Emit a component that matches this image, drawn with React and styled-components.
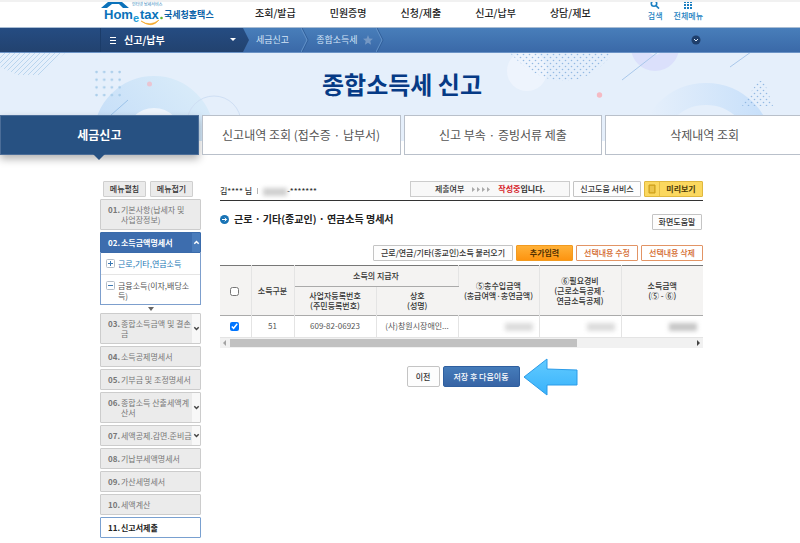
import React, { useState } from 'react';
import styled, { createGlobalStyle, css } from 'styled-components';

const GlobalStyle = createGlobalStyle`
  * {
    box-sizing: border-box;
  }

  body {
    margin: 0;
    background-color: #ffffff;
    color: #333333;
    font-family: 'Noto Sans CJK KR', sans-serif;
    font-size: 8px;
    line-height: 10px;
    overflow-x: hidden;
  }

  button, input {
    font-family: inherit;
    font-size: inherit;
    line-height: inherit;
    cursor: pointer;
  }

  a {
    color: inherit;
    text-decoration: none;
  }
`;

const Header = styled.header`
  display: flex;
  height: 27px;
  padding: 0 97px 0 100px;
  border-top: 2px solid #f1f1f1;
`;

const Logo = styled.a`
  flex: none;
  width: 115px;
  height: 25px;

  svg {
    overflow: visible;
  }
`;

const MainNav = styled.nav`
  display: flex;
  flex: 1;
  gap: 34px;
  padding: 2px 0 0 40px;
`;

const MainNavLink = styled.a`
  font-size: 10px;
  line-height: 18px;
  font-weight: 500;
  color: #222222;
  white-space: nowrap;
`;

const Tools = styled.div`
  display: flex;
  gap: 11px;
`;

const ToolButton = styled.button`
  display: flex;
  flex-direction: column;
  align-items: center;
  gap: 2px;
  padding: 0;
  border: none;
  background-color: transparent;
  color: #1b7fc1;
  font-weight: 500;
  white-space: nowrap;
`;

const Location = styled.nav`
  display: flex;
  align-items: center;
  height: 26px;
  padding-right: 97px;
  background: linear-gradient(#487eba, #3a69a8);
  border-top: 1px solid #a9bdd4;
  border-bottom: 1px solid #6b93c6;
  color: #d3e4f7;
`;

const LocationCurrent = styled.button`
  display: flex;
  align-items: center;
  gap: 7px;
  width: 249px;
  height: 24px;
  padding: 0 13px 0 109px;
  border: none;
  background: linear-gradient(90deg, transparent 100px, #1b3c69 100px, #1b3c69 101px, transparent 101px), linear-gradient(#254c82, #22426f);
  clip-path: polygon(0 0, 243px 0, 249px 12px, 243px 100%, 0 100%);
  color: #ffffff;
  font-size: 10px;
  font-weight: 700;
  text-align: left;

  span {
    flex: 1;
  }
`;

const LocationLink = styled.a`
  display: flex;
  align-items: center;
  gap: 5px;
  padding: 0 12px 0 7px;
  font-size: 9px;

  &:last-of-type {
    padding-right: 3px;
  }
`;

const LocationToggle = styled.button`
  display: flex;
  margin-left: auto;
  margin-right: 2px;
  padding: 0;
  border: none;
  background-color: transparent;
`;

const Banner = styled.section`
  position: relative;
  height: 62px;
  padding: 0 0 0 4px;
`;

const BannerArt = styled.svg`
  position: absolute;
  left: 0;
  top: 0;
  z-index: -1;
  width: 100%;
  height: 88px;
  background-color: #e5effb;
`;

const PageTitle = styled.h1`
  margin: 0;
  padding-top: 15px;
  color: #063a85;
  font-size: 24px;
  line-height: 32px;
  font-weight: 700;
  text-align: center;
`;

const Tabs = styled.nav`
  display: grid;
  grid-template-columns: repeat(4, 1fr);
  gap: 3px;
  margin-right: -4px;
`;

const Tab = styled.button`
  position: relative;
  height: 40px;
  padding: 0;
  border: 1px solid #b9c0ca;
  background-color: #ffffff;
  color: #555555;
  font-size: 12px;
  line-height: 18px;
  white-space: nowrap;

  ${(props) => props.$active && css`
    border-color: #4b6d98;
    background-color: #275182;
    color: #ffffff;
    font-weight: 700;
    box-shadow: 0 4px 8px rgba(0, 0, 0, 0.3);

    &::after {
      content: '';
      position: absolute;
      left: 50%;
      top: 100%;
      margin-left: -6px;
      border: 6px solid transparent;
      border-top-color: #275182;
      border-bottom: none;
    }
  `}
`;

const Body = styled.div`
  display: flex;
  align-items: flex-start;
  gap: 19px;
  padding: 26px 97px 0 100px;
`;

const Side = styled.aside`
  flex: none;
  width: 101px;
`;

const SideTools = styled.div`
  display: flex;
  gap: 4px;
  padding: 0 3px;
  margin-bottom: 2px;
`;

const SideButton = styled.button`
  width: 43px;
  height: 16px;
  padding: 0;
  border: 1px solid #cfcfcf;
  border-radius: 1px;
  background-color: #ebebeb;
  color: #333333;
  font-weight: 500;
  white-space: nowrap;
`;

const StepList = styled.ol`
  display: flex;
  flex-direction: column;
  gap: 2px;
  margin: 0;
  padding: 0;
  list-style: none;
`;

const StepButton = styled.button`
  display: flex;
  align-items: center;
  width: 100%;
  height: ${(props) => (props.$tall ? '31px' : '21px')};
  padding: 0;
  overflow: hidden;
  border: 1px solid #cccccc;
  border-radius: 1px;
  background-color: #ebebeb;
  color: #777777;
  text-align: left;

  ${(props) => props.$open && css`
    border-color: #3a6bab;
    background-color: #3d6dae;
    color: #ffffff;
    font-weight: 700;
  `}

  ${(props) => props.$current && css`
    border-color: #79a0d0;
    background-color: #ffffff;
    color: #222222;
    font-weight: 700;
  `}
`;

const StepNumber = styled.b`
  flex: none;
  align-self: flex-start;
  width: 20px;
  padding: 5px 0 0 7px;
  font-weight: 700;
`;

const StepLabel = styled.span`
  flex: 1;
  align-self: flex-start;
  padding-top: 5px;
  white-space: pre;
`;

const StepArrow = styled.span`
  display: flex;
  flex: none;
  align-items: center;
  justify-content: center;
  width: 8px;
  height: 100%;
  background-color: ${(props) => (props.$open ? '#4a7cbb' : '#f8f8f8')};
`;

const SubList = styled.ul`
  margin: 0;
  padding: 0;
  border: 1px solid #7d9fcd;
  border-top: none;
  list-style: none;
`;

const SubItem = styled.li`
  display: flex;
  align-items: flex-start;
  gap: 3px;
  padding: 6px 5px 5px;

  & + & {
    padding: 6px 5px 3px;
    border-top: 1px solid #e5e5e5;
  }
`;

const SubLink = styled.a`
  color: ${(props) => (props.$active ? '#2377b5' : '#555555')};
  white-space: pre;
`;

const SubArrow = styled.div`
  display: flex;
  justify-content: center;
  height: 8px;
  margin-bottom: -2px;
  padding-top: 2px;
`;

const Content = styled.main`
  flex: 1;
  min-width: 0;
`;

const UserBar = styled.div`
  display: flex;
  align-items: flex-start;
  gap: 3px;
  height: 20px;
  border-bottom: 1px solid #333333;
`;

const UserName = styled.p`
  display: flex;
  flex: 1;
  align-items: center;
  gap: 5px;
  margin: 0;
  padding-top: 5px;
  font-weight: 500;
  white-space: nowrap;
`;

const Divider = styled.i`
  width: 1px;
  height: 6px;
  background-color: #b5b5b5;
`;

const Masked = styled.span`
  display: inline-block;
  width: ${(props) => props.$width};
  height: 8px;
  background-color: ${(props) => props.$color || '#cfcfcf'};
  filter: blur(2px);
  vertical-align: middle;
`;

const Status = styled.div`
  display: flex;
  align-items: center;
  justify-content: center;
  gap: 8px;
  width: 160px;
  height: 16px;
  border: 1px solid #cccccc;
  background-color: #f8f8f8;
  font-weight: 500;

  span {
    font-weight: 700;
  }

  em {
    color: #d6232a;
    font-style: normal;
  }
`;

const buttonColors = {
  plain: css`
    border-color: #c4c4c4;
    background-color: #fdfdfd;
    color: #333333;
  `,
  yellow: css`
    border-color: #e0b83e;
    background-color: #fbd85f;
    color: #4a3a08;
    font-weight: 700;
  `,
  orange: css`
    border-color: #f29a1f;
    background: linear-gradient(#ffb138, #fd9410);
    color: #533000;
    font-weight: 700;
  `,
  outline: css`
    border-color: #e29465;
    background-color: #ffffff;
    color: #d3682c;
  `,
  blue: css`
    border-color: #2f5f9f;
    background: linear-gradient(#457cba, #3764a5);
    color: #ffffff;
  `,
};

const Button = styled.button`
  display: flex;
  align-items: center;
  justify-content: center;
  width: ${(props) => props.$width};
  height: ${(props) => (props.$large ? '21px' : '16px')};
  padding: 0;
  border: 1px solid;
  border-radius: ${(props) => (props.$large ? '2px' : '1px')};
  font-weight: 500;
  white-space: nowrap;
  ${(props) => buttonColors[props.$color || 'plain']}

  svg {
    flex: none;
  }

  span {
    flex: 1;
  }
`;

const TitleRow = styled.div`
  display: flex;
  justify-content: space-between;
  padding: 10px 1px 0 0;
`;

const SectionTitle = styled.h2`
  display: flex;
  align-items: center;
  gap: 5px;
  height: 16px;
  margin: 0;
  color: #222222;
  font-size: 10px;
  line-height: 16px;
  font-weight: 700;
  white-space: nowrap;
`;

const HelpBox = styled.div`
  padding-top: 3px;
`;

const Actions = styled.div`
  display: flex;
  justify-content: flex-end;
  gap: 3px;
  margin: 15px 0 4px;
`;

const Table = styled.table`
  width: 100%;
  table-layout: fixed;
  border-collapse: collapse;
  border-top: 1px solid #777777;
  text-align: center;

  th, td {
    padding: 0;
    border-right: 1px solid #e4e4e4;
    white-space: pre;
  }

  th:last-child, td:last-child {
    border-right: none;
  }

  thead {
    background-color: #f4f3f2;
    border-bottom: 1px solid #aaaaaa;
  }

  th {
    font-weight: 500;
  }

  td {
    height: 21px;
    color: #555555;
  }
`;

const HeadRow = styled.tr`
  height: ${(props) => props.$height};

  th[colspan] {
    border-bottom: 1px solid #aaaaaa;
  }
`;

const AmountCell = styled.td`
  && {
    padding-right: 6px;
    text-align: right;
  }
`;

const Check = styled.input`
  width: 9px;
  height: 9px;
  margin: 0 2px 0 0;
  vertical-align: middle;
`;

const ScrollBar = styled.div`
  display: flex;
  align-items: center;
  justify-content: space-between;
  height: 11px;
  padding: 0 3px;
  background-color: #f1f1f1;
  border-top: 1px solid #e4e4e4;
`;

const ScrollTrack = styled.div`
  flex: 1;
  height: 8px;
  margin: 0 4px 0 3px;
`;

const ScrollThumb = styled.div`
  width: 75%;
  height: 100%;
  background-color: #c1c1c1;
`;

const Bottom = styled.div`
  display: flex;
  align-items: center;
  justify-content: center;
  gap: 3px;
  margin-top: 10px;
  padding-left: 62px;
`;

const steps = [
  { no: '01.', label: '기본사항(납세자 및\n사업장정보)', tall: true },
  { no: '02.', label: '소득금액명세서', open: true, arrow: true },
  { no: '03.', label: '종합소득금액 및 결손\n금', tall: true, arrow: true },
  { no: '04.', label: '소득공제명세서' },
  { no: '05.', label: '기부금 및 조정명세서' },
  { no: '06.', label: '종합소득 산출세액계\n산서', tall: true, arrow: true },
  { no: '07.', label: '세액공제.감면.준비금', arrow: true },
  { no: '08.', label: '기납부세액명세서' },
  { no: '09.', label: '가산세명세서' },
  { no: '10.', label: '세액계산' },
  { no: '11.', label: '신고서제출', current: true },
];

const tabs = ['세금신고', '신고내역 조회 (접수증 · 납부서)', '신고 부속 · 증빙서류 제출', '삭제내역 조회'];

const Chevron = ({ up, color = '#444444' }) => (
  <svg width="7" height="7" viewBox="0 0 7 7" fill="none" stroke={color} strokeWidth="1.5">
    <path d={up ? 'M1.3 4.7 3.5 2.5l2.2 2.2' : 'M1.3 2.3l2.2 2.2 2.2-2.2'} />
  </svg>
);

const Separator = () => (
  <svg width="8" height="24" viewBox="0 0 8 24" fill="none">
    <path d="M1 0l6 12-6 12" stroke="#2f5c97" />
    <path d="M0 0l6 12-6 12" stroke="#6393c9" />
  </svg>
);

const TreeIcon = ({ plus }) => (
  <svg width="9" height="9" viewBox="0 0 9 9" fill="none">
    <rect x=".5" y=".5" width="8" height="8" rx="1" fill="#fff" stroke="#b5bec8" />
    <path d={plus ? 'M2 4.5h5M4.5 2v5' : 'M2 4.5h5'} stroke="#3b78b3" />
  </svg>
);

const HometaxLogo = () => (
  <svg width="115" height="25" viewBox="0 0 115 25">
    <path d="M1 6 8 0h14l7 6h-6l-4-4h-7L7 6z" fill="#0b72ba" />
    <text x="32" y="4" fontSize="4" fill="#2b7fb9">인터넷 납세서비스</text>
    <text x="4" y="17" fontFamily="Liberation Sans, sans-serif" fontSize="13" fontWeight="700" fill="#0b72ba">Hom</text>
    <text x="33" y="20" fontFamily="Liberation Sans, sans-serif" fontSize="11" fontWeight="700" fill="#1a9bd7">e</text>
    <text x="40" y="17" fontFamily="Liberation Sans, sans-serif" fontSize="13" fontWeight="700" fill="#0b72ba">tax</text>
    <path d="M41 19q9 6 18-1q-7 9-18 1z" fill="#f5a623" stroke="#f5a623" strokeWidth=".6" />
    <circle cx="61.5" cy="16" r="1.3" fill="#5cb531" />
    <text x="64" y="16" fontSize="9" fontWeight="700" fill="#0b62a8">국세청홈택스</text>
  </svg>
);

const BannerDrawing = () => (
  <BannerArt viewBox="0 0 800 88" preserveAspectRatio="xMidYMin slice" fill="none">
    <defs>
      <pattern id="stripes" width="5" height="5" patternUnits="userSpaceOnUse">
        <path d="M-1 6 6-1M-1 1l2-2M4 6l2-2" stroke="#b4d2ec" strokeWidth=".9" />
      </pattern>
      <pattern id="dots" width="6" height="6" patternUnits="userSpaceOnUse">
        <circle cx="1.5" cy="1.5" r=".8" fill="#93b9e2" />
        <circle cx="4.5" cy="4.5" r=".8" fill="#93b9e2" />
      </pattern>
      <pattern id="grid" width="7.7" height="7.7" x="93" y="17" patternUnits="userSpaceOnUse">
        <circle cx="3.5" cy="2" r="1.3" fill="#a9cdea" />
      </pattern>
      <linearGradient id="ringLeft" x1="0" y1="1" x2="1" y2="0">
        <stop offset="0" stopColor="#c0daf8" />
        <stop offset="1" stopColor="#d8ebf9" />
      </linearGradient>
      <linearGradient id="ringRight">
        <stop offset="0" stopColor="#e5effb" />
        <stop offset="1" stopColor="#c8e0fa" />
      </linearGradient>
    </defs>
    <path d="M0 0h65L40 22H18L0 14z" fill="url(#stripes)" />
    <circle cx="154" cy="83" r="44" fill="#edf4fc" stroke="url(#ringLeft)" strokeWidth="32" />
    <circle cx="214" cy="70" r="27" stroke="#cfdff4" />
    <rect x="93" y="17" width="30" height="30" fill="url(#grid)" />
    <path d="M111 62l17-15" stroke="#9cc3ea" />
    <circle cx="149.5" cy="31" r="2.5" fill="#eac5d2" />
    <circle cx="527" cy="18" r="20" fill="#eef4fd" />
    <path d="M510 0h103q-21 28-49 28T510 0z" fill="url(#dots)" />
    <circle cx="655" cy="-6" r="16" stroke="#dbe0fb" strokeWidth="16" />
    <path d="M622 27l36-28M730 14l21-15" stroke="#a9c7ea" />
    <circle cx="599.5" cy="42" r="2.7" fill="#f5bac3" />
    <circle cx="706" cy="97" r="56" stroke="url(#ringRight)" strokeWidth="22" />
    <path d="M758 28h6l9 25h-31z" fill="url(#dots)" />
  </BannerArt>
);

const App = () => {
  const [activeTab, setActiveTab] = useState(0);
  const [allChecked, setAllChecked] = useState(false);
  const [rowChecked, setRowChecked] = useState(true);

  return (
    <>
      <GlobalStyle />
      <Header>
        <Logo href="#" aria-label="국세청홈택스"><HometaxLogo /></Logo>
        <MainNav>
          {['조회/발급', '민원증명', '신청/제출', '신고/납부', '상담/제보'].map((menu) => (
            <MainNavLink href="#" key={menu}>{menu}</MainNavLink>
          ))}
        </MainNav>
        <Tools>
          <ToolButton>
            <svg width="10" height="7" viewBox="0 0 10 7" fill="none" stroke="#1b7fc1" strokeWidth="1.6">
              <circle cx="4" cy="1.6" r="2.7" />
              <path d="M6 3.6l3 3" />
            </svg>
            검색
          </ToolButton>
          <ToolButton>
            <svg width="9" height="7" viewBox="0 0 9 7" fill="#1b7fc1">
              <path d="M0 0h2v1H0zM3 0h2v1H3zM6 0h2v1H6zM0 2h2v2H0zM3 2h2v2H3zM6 2h2v2H6zM0 5h2v2H0zM3 5h2v2H3zM6 5h2v2H6z" />
            </svg>
            전체메뉴
          </ToolButton>
        </Tools>
      </Header>

      <Location>
        <LocationCurrent>
          <svg width="8" height="7" viewBox="0 0 8 7" stroke="#fff"><path d="M1 .5h6M1 3.5h6M1 6.5h6" /></svg>
          <span>신고/납부</span>
          <svg width="6" height="4" viewBox="0 0 6 4" fill="#fff"><path d="M0 0h6L3 3z" /></svg>
        </LocationCurrent>
        <LocationLink href="#">세금신고</LocationLink>
        <Separator />
        <LocationLink href="#">
          종합소득세
          <svg width="10" height="10" viewBox="0 0 10 10" fill="#7598c4"><path d="M5 0l1.4 3.4 3.6.3-2.7 2.4.8 3.6L5 7.8 1.9 9.7l.8-3.6L0 3.7l3.6-.3z" /></svg>
        </LocationLink>
        <Separator />
        <LocationToggle aria-label="펼치기">
          <svg width="10" height="10" viewBox="0 0 10 10" fill="none">
            <circle cx="5" cy="5" r="4.5" fill="#1f3f6c" />
            <path d="M3 4l2 2 2-2" stroke="#dfe9f5" />
          </svg>
        </LocationToggle>
      </Location>

      <Banner>
        <BannerDrawing />
        <PageTitle>종합소득세 신고</PageTitle>
      </Banner>

      <Tabs>
        {tabs.map((tab, index) => (
          <Tab key={tab} $active={index === activeTab} onClick={() => setActiveTab(index)}>{tab}</Tab>
        ))}
      </Tabs>

      <Body>
        <Side>
          <SideTools>
            <SideButton>메뉴펼침</SideButton>
            <SideButton>메뉴접기</SideButton>
          </SideTools>
          <StepList>
            {steps.map((step) => (
              <li key={step.no}>
                <StepButton $tall={step.tall} $open={step.open} $current={step.current}>
                  <StepNumber>{step.no}</StepNumber>
                  <StepLabel>{step.label}</StepLabel>
                  {step.arrow && (
                    <StepArrow $open={step.open}>
                      <Chevron up={step.open} color={step.open ? '#ffffff' : '#444444'} />
                    </StepArrow>
                  )}
                </StepButton>
                {step.open && (
                  <>
                    <SubList>
                      <SubItem>
                        <TreeIcon plus />
                        <SubLink href="#" $active>근로,기타,연금소득</SubLink>
                      </SubItem>
                      <SubItem>
                        <TreeIcon />
                        <SubLink href="#">{'금융소득(이자,배당소\n득)'}</SubLink>
                      </SubItem>
                    </SubList>
                    <SubArrow>
                      <svg width="6" height="4" viewBox="0 0 6 4" fill="#666"><path d="M0 0h6L3 4z" /></svg>
                    </SubArrow>
                  </>
                )}
              </li>
            ))}
          </StepList>
        </Side>

        <Content>
          <UserBar>
            <UserName>
              <span>김**** 님</span>
              <Divider />
              <span><Masked $width="24px" />-*******</span>
            </UserName>
            <Status>
              제출여부
              <svg width="18" height="5" viewBox="0 0 18 5" fill="#aaa"><path d="M0 0l3 2.5L0 5zM5 0l3 2.5L5 5zM10 0l3 2.5L10 5zM15 0l3 2.5L15 5z" /></svg>
              <span><em>작성중</em>입니다.</span>
            </Status>
            <Button $width="68px">신고도움 서비스</Button>
            <Button $width="59px" $color="yellow">
              <svg width="15" height="14" viewBox="0 0 15 14" fill="none">
                <path d="M14.5 0v14" stroke="#e5bd45" />
                <path d="M4 3h6v8H4z" fill="#e3b52c" stroke="#c99c1c" />
                <path d="M5 5h4M5 7h4M5 9h4" stroke="#f3d36a" />
              </svg>
              <span>미리보기</span>
            </Button>
          </UserBar>

          <TitleRow>
            <SectionTitle>
              <svg width="9" height="9" viewBox="0 0 9 9" fill="none">
                <circle cx="4.5" cy="4.5" r="4.5" fill="#1873b5" />
                <path d="M2 4.5h4.5M4.8 2.7l1.8 1.8-1.8 1.8" stroke="#fff" />
              </svg>
              근로 · 기타(종교인) · 연금소득 명세서
            </SectionTitle>
            <HelpBox><Button $width="50px">화면도움말</Button></HelpBox>
          </TitleRow>

          <Actions>
            <Button $width="140px">근로/연금/기타(종교인)소득 불러오기</Button>
            <Button $width="57px" $color="orange">추가입력</Button>
            <Button $width="62px" $color="outline">선택내용 수정</Button>
            <Button $width="62px" $color="outline">선택내용 삭제</Button>
          </Actions>

          <Table>
            <colgroup>
              <col width="31" />
              <col width="43" />
              <col width="82" />
              <col width="82" />
              <col width="81" />
              <col width="82" />
              <col width="82" />
            </colgroup>
            <thead>
              <HeadRow $height="21px">
                <th rowSpan="2">
                  <Check type="checkbox" aria-label="전체 선택" checked={allChecked} onChange={() => setAllChecked(!allChecked)} />
                </th>
                <th rowSpan="2">소득구분</th>
                <th colSpan="2">소득의 지급자</th>
                <th rowSpan="2">{'⑤총수입금액\n(총급여액·총연금액)'}</th>
                <th rowSpan="2">{'⑥필요경비\n(근로소득공제·\n연금소득공제)'}</th>
                <th rowSpan="2">{'소득금액\n(⑤ - ⑥)'}</th>
              </HeadRow>
              <HeadRow $height="29px">
                <th>{'사업자등록번호\n(주민등록번호)'}</th>
                <th>{'상호\n(성명)'}</th>
              </HeadRow>
            </thead>
            <tbody>
              <tr>
                <td>
                  <Check type="checkbox" aria-label="51 선택" checked={rowChecked} onChange={() => setRowChecked(!rowChecked)} />
                </td>
                <td>51</td>
                <td>609-82-06923</td>
                <td>(사)창원시장애인...</td>
                <AmountCell><Masked $width="28px" $color="#dcdcdc" /></AmountCell>
                <AmountCell><Masked $width="28px" $color="#dcdcdc" /></AmountCell>
                <AmountCell><Masked $width="28px" $color="#c6c6c6" /></AmountCell>
              </tr>
            </tbody>
          </Table>
          <ScrollBar>
            <svg width="4" height="6" viewBox="0 0 4 6" fill="#a3a3a3"><path d="M3 0v6L0 3z" /></svg>
            <ScrollTrack><ScrollThumb /></ScrollTrack>
            <svg width="4" height="6" viewBox="0 0 4 6" fill="#444"><path d="M1 0v6l3-3z" /></svg>
          </ScrollBar>

          <Bottom>
            <Button $large $width="33px">이전</Button>
            <Button $large $width="77px" $color="blue">저장 후 다음이동</Button>
            <svg width="56" height="38" viewBox="0 0 56 38">
              <defs>
                <linearGradient id="arrow" x1="0" y1="0" x2="0" y2="1">
                  <stop offset="0" stopColor="#62cbff" />
                  <stop offset="1" stopColor="#38b2fb" />
                </linearGradient>
              </defs>
              <path d="M1 19 24 1v10l30 1v15H24v10z" fill="url(#arrow)" stroke="#2b9be8" />
            </svg>
          </Bottom>
        </Content>
      </Body>
    </>
  );
};

export default App;
